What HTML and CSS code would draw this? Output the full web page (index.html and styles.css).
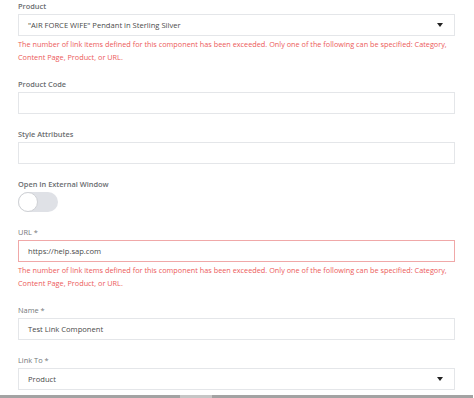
FILE: index.html
```html
<!DOCTYPE html>
<html lang="en">
<head>
    <meta charset="UTF-8">
    <meta name="viewport" content="width=device-width, initial-scale=1.0">
    <title>Link Component</title>
    <link rel="stylesheet" href="styles.css">
</head>
<body>

    <form class="editor">
        <div class="field">
            <label>Product</label>
            <div class="select">
                <span>"AIR FORCE WIFE" Pendant in Sterling Silver</span>
                <svg width="6" height="4" viewBox="0 0 6 4"><path d="M0 0h6L3 4z" fill="#222"/></svg>
            </div>
            <p class="error">The number of link items defined for this component has been exceeded. Only one of the following can be specified: Category, Content Page, Product, or URL.</p>
        </div>

        <div class="field">
            <label>Product Code</label>
            <div class="input"></div>
        </div>

        <div class="field">
            <label>Style Attributes</label>
            <div class="input"></div>
        </div>

        <div class="field">
            <label>Open In External Window</label>
            <div class="toggle"><span class="knob"></span></div>
        </div>

        <div class="field">
            <label class="plain">URL *</label>
            <div class="input invalid">https://help.sap.com</div>
            <p class="error">The number of link items defined for this component has been exceeded. Only one of the following can be specified: Category, Content Page, Product, or URL.</p>
        </div>

        <div class="field">
            <label class="plain">Name *</label>
            <div class="input">Test Link Component</div>
        </div>

        <div class="field">
            <label class="plain">Link To *</label>
            <div class="select">
                <span>Product</span>
                <svg width="6" height="4" viewBox="0 0 6 4"><path d="M0 0h6L3 4z" fill="#222"/></svg>
            </div>
        </div>
    </form>

    <div class="scrollbar"><span class="thumb"></span></div>

</body>
</html>
```

FILE: styles.css
```css
* { margin: 0; padding: 0; box-sizing: border-box; font-family: "Open Sans", Arial, sans-serif; }
body { width: 474px; height: 398px; overflow: hidden; background: white; position: relative; }
.editor { padding: 0 19px 0 18px; }
.field { margin-bottom: 14px; }
label { display: block; font-size: 7.4px; line-height: 12px; font-weight: 600; color: #6a6d70; margin-bottom: 2px; }
label.plain { font-weight: 400; color: #74777a; }
.input, .select { height: 22px; border: 1px solid #e4e6e9; background: white; font-size: 7.6px; color: #4a4a4a; padding: 0 9px; display: flex; align-items: center; justify-content: space-between; }
.select svg { margin-right: 2px; }
.input.invalid { border-color: #f0a8a8; }
.error { color: #ec5a5a; font-size: 7.3px; line-height: 13px; margin-top: 2px; }
.toggle { width: 40px; height: 20px; border-radius: 10px; background: #dfe1e6; position: relative; }
.knob { position: absolute; left: 0; top: 0; width: 20px; height: 20px; border-radius: 50%; background: white; border: 1px solid #cfd1d5; }
.scrollbar { position: absolute; left: 0; right: 1px; bottom: 0; height: 3px; background: #a3a3a3; }
.thumb { position: absolute; left: 180px; width: 32px; height: 3px; background: #c6c6c6; }
```
